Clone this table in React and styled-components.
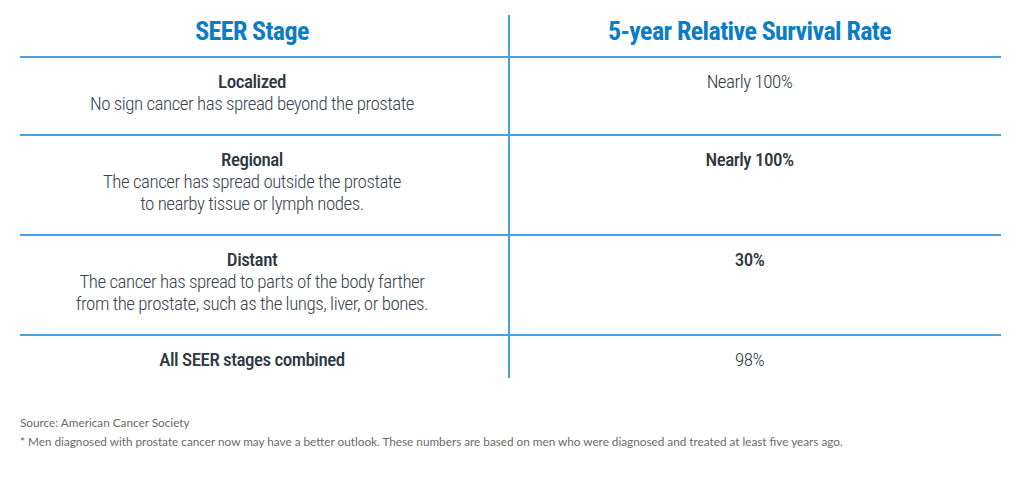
import React from "react";
import styled, {createGlobalStyle} from "styled-components";

const GlobalStyle = createGlobalStyle`
  body {
    margin: 0;
    background: #ffffff;
  }
`;

const LINE = "#4a9fdc";
const CONDENSED = `"Roboto Condensed", "DejaVu Sans Condensed", "Liberation Sans Narrow", Roboto, sans-serif`;

const Page = styled.div`
  width: 1024px;
  height: 482px;
  padding: 15px 0 0 20px;
  box-sizing: border-box;
  font-family: ${CONDENSED};
  font-stretch: condensed;
`;

const Table = styled.div`
  width: 981px;
`;

const Row = styled.div`
  display: grid;
  grid-template-columns: 488px 1fr;
  border-bottom: ${(p) => (p.$last ? "none" : `2px solid ${LINE}`)};
`;

const StageCell = styled.div`
  text-align: center;
  padding: ${(p) => p.$pad || "13px 24px 19px 0"};
`;

const RateCell = styled.div`
  text-align: center;
  border-left: 2px solid ${LINE};
  padding: ${(p) => p.$pad || "13px 12px 19px 0"};
`;

const HeadText = styled.div`
  color: #0b7dc4;
  font-size: 26px;
  line-height: 30px;
  font-weight: 700;
  letter-spacing: -0.6px;
`;

const Title = styled.div`
  color: #2e3842;
  font-size: 19px;
  line-height: 22px;
  font-weight: 500;
  letter-spacing: -0.5px;
`;

const Desc = styled.div`
  color: #3a434d;
  font-size: 19px;
  line-height: 22px;
  font-weight: 300;
  letter-spacing: -0.5px;
`;

const Rate = styled.div`
  color: #2e3842;
  font-size: 19px;
  line-height: 22px;
  font-weight: ${(p) => (p.$strong ? 500 : 300)};
  letter-spacing: -0.5px;
`;

const Notes = styled.div`
  margin-top: 35px;
  font-family: Lato, "Open Sans", sans-serif;
  font-size: 11.75px;
  line-height: 19px;
  color: #6a6a6a;
`;

const rows = [
  {
    title: "Localized",
    desc: ["No sign cancer has spread beyond the prostate"],
    rate: "Nearly 100%",
    strong: false,
  },
  {
    title: "Regional",
    desc: ["The cancer has spread outside the prostate", "to nearby tissue or lymph nodes."],
    rate: "Nearly 100%",
    strong: true,
  },
  {
    title: "Distant",
    desc: [
      "The cancer has spread to parts of the body farther",
      "from the prostate, such as the lungs, liver, or bones.",
    ],
    rate: "30%",
    strong: true,
  },
];

export default function App() {
  return (
    <Page>
      <GlobalStyle />
      <Table>
        <Row>
          <StageCell $pad="1px 24px 10px 0">
            <HeadText>SEER Stage</HeadText>
          </StageCell>
          <RateCell $pad="1px 12px 10px 0">
            <HeadText>5-year Relative Survival Rate</HeadText>
          </RateCell>
        </Row>
        {rows.map((r) => (
          <Row key={r.title}>
            <StageCell>
              <Title>{r.title}</Title>
              {r.desc.map((d) => (
                <Desc key={d}>{d}</Desc>
              ))}
            </StageCell>
            <RateCell>
              <Rate $strong={r.strong}>{r.rate}</Rate>
            </RateCell>
          </Row>
        ))}
        <Row $last>
          <StageCell $pad="13px 24px 7px 0">
            <Title>All SEER stages combined</Title>
          </StageCell>
          <RateCell $pad="13px 12px 7px 0">
            <Rate>98%</Rate>
          </RateCell>
        </Row>
      </Table>
      <Notes>
        <div>Source: American Cancer Society</div>
        <div>
          * Men diagnosed with prostate cancer now may have a better outlook. These numbers are based on men who
          were diagnosed and treated at least five years ago.
        </div>
      </Notes>
    </Page>
  );
}
